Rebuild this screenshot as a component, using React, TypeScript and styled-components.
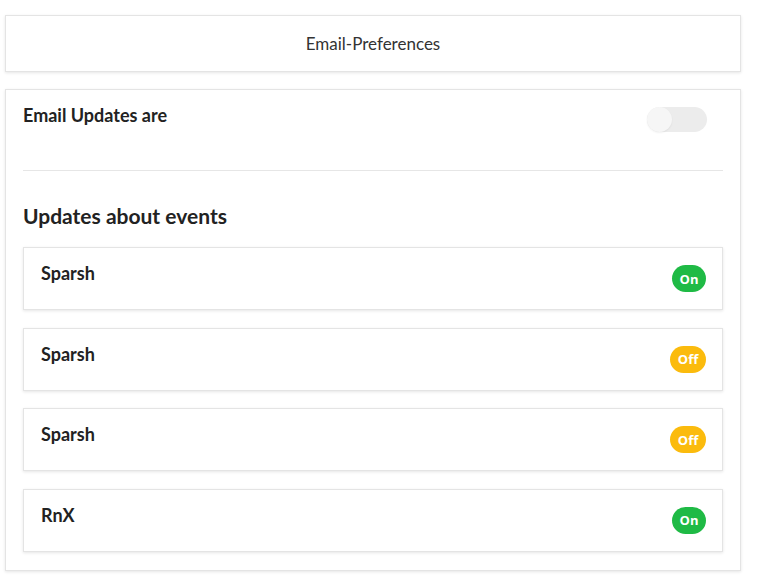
import { FC } from "react";
import styled, { createGlobalStyle } from "styled-components";

const GlobalStyle = createGlobalStyle`
  body {
    margin: 0;
    background: #ffffff;
    font-family: Lato, "Liberation Sans", sans-serif;
    color: #222;
  }
`;

type Pref = { name: string; on: boolean };

const prefs: Pref[] = [
  { name: "Sparsh", on: true },
  { name: "Sparsh", on: false },
  { name: "Sparsh", on: false },
  { name: "RnX", on: true },
];

const App: FC = () => {
  return (
    <Page>
      <GlobalStyle />
      <HeaderCard>Email-Preferences</HeaderCard>
      <MainCard>
        <TopRow>
          <RowLabel>Email Updates are</RowLabel>
          <Toggle>
            <Knob />
          </Toggle>
        </TopRow>
        <Divider />
        <SectionTitle>Updates about events</SectionTitle>
        <EventList>
          {prefs.map((p, i) => (
            <EventCard key={i}>
              <RowLabel>{p.name}</RowLabel>
              <Badge $on={p.on}>{p.on ? "On" : "Off"}</Badge>
            </EventCard>
          ))}
        </EventList>
      </MainCard>
    </Page>
  );
};

export default App;

const Page = styled.div`
  padding: 15px 17px 8px 5px;
  display: flex;
  flex-direction: column;
  gap: 17px;
`;

const Card = styled.div`
  background: #fff;
  border: 1px solid #e4e4e4;
  box-shadow: 0 1px 3px rgba(0, 0, 0, 0.1);
  box-sizing: border-box;
`;

const HeaderCard = styled(Card)`
  height: 57px;
  display: flex;
  align-items: center;
  justify-content: center;
  font-size: 17px;
  color: #333;
`;

const MainCard = styled(Card)`
  padding: 15px 17px 18px 17px;
`;

const TopRow = styled.div`
  display: flex;
  justify-content: space-between;
  align-items: flex-start;
  height: 65px;
`;

const RowLabel = styled.div`
  font-size: 18px;
  font-weight: 700;
  line-height: 20px;
  color: #222;
`;

const Toggle = styled.div`
  width: 60px;
  height: 25px;
  border-radius: 13px;
  background: #ececec;
  margin: 2px 16px 0 0;
  position: relative;
`;

const Knob = styled.div`
  position: absolute;
  left: 0;
  top: 0;
  width: 25px;
  height: 25px;
  border-radius: 50%;
  background: #f6f6f6;
  box-shadow: 0 1px 2px rgba(0, 0, 0, 0.06);
`;

const Divider = styled.div`
  height: 1px;
  background: #e6e6e6;
`;

const SectionTitle = styled.h2`
  margin: 32px 0 18px 0;
  font-size: 21px;
  line-height: 26px;
  font-weight: 700;
  color: #222;
`;

const EventList = styled.div`
  display: flex;
  flex-direction: column;
  gap: 17.6px;
`;

const EventCard = styled(Card)`
  height: 63px;
  padding: 15px 16px 0 17px;
  display: flex;
  justify-content: space-between;
  align-items: flex-start;
`;

const Badge = styled.div<{ $on: boolean }>`
  margin-top: 2px;
  height: 27px;
  min-width: ${(p) => (p.$on ? "34px" : "36px")};
  padding: 0 5px;
  box-sizing: border-box;
  border-radius: 14px;
  background: ${(p) => (p.$on ? "#1fba45" : "#fbbb0d")};
  color: #fff;
  font-family: "Open Sans", Lato, sans-serif;
  font-size: 13px;
  font-weight: 700;
  display: flex;
  align-items: center;
  justify-content: center;
`;
